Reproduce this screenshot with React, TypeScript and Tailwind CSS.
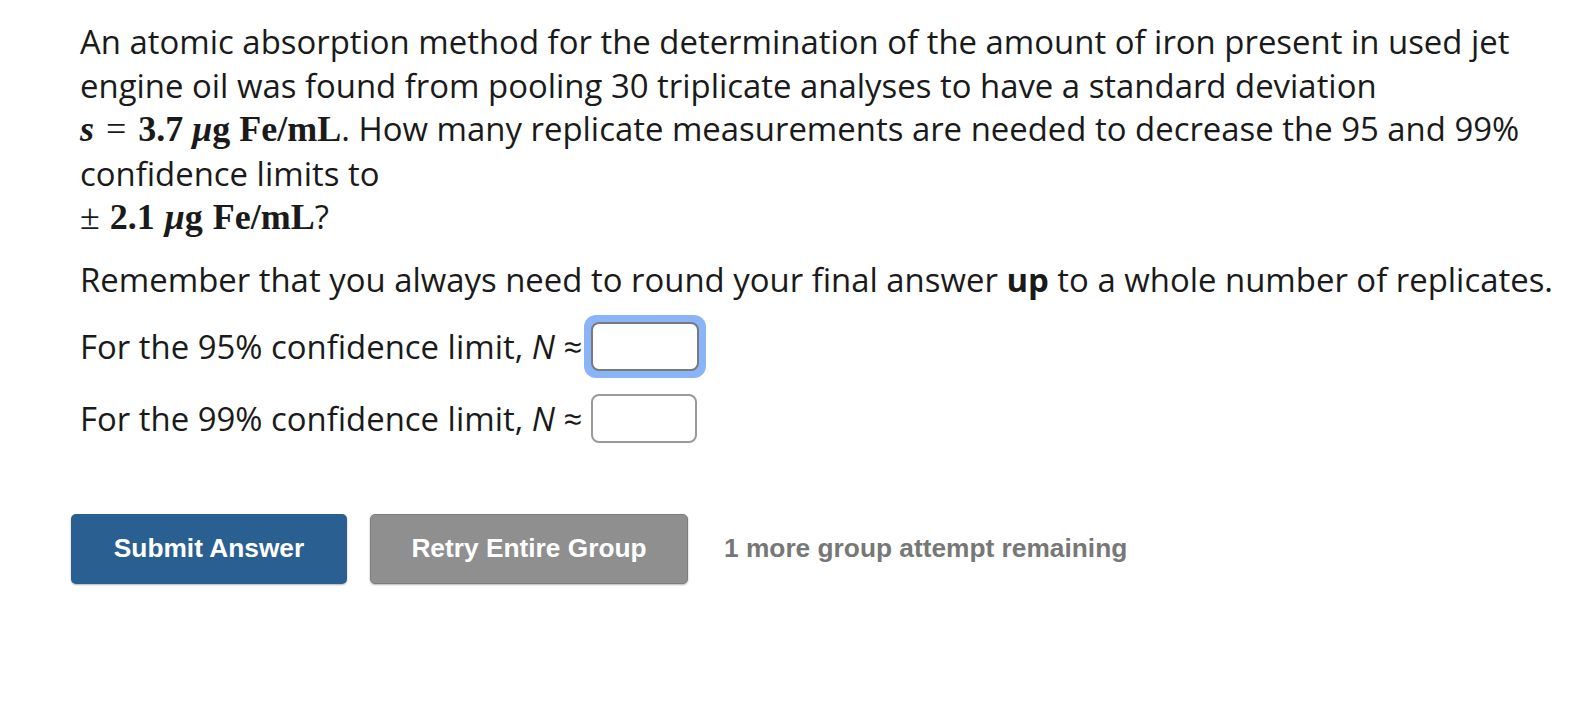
import React from "react";

const math = "font-['Liberation_Serif',serif] font-bold text-[36px]";

export default function App() {
  return (
    <div className="w-[1589px] h-[708px] bg-white text-[#1a1a1a] font-['Open_Sans',sans-serif]">
      <div className="pl-[80px] pt-[20px] pr-[20px] text-[32.9px] leading-[43.5px]">
        <p className="whitespace-nowrap">
          An atomic absorption method for the determination of the amount of iron present in used jet
          <br />
          engine oil was found from pooling 30 triplicate analyses to have a standard deviation
          <br />
          <span className={math}>
            <i>s</i>
            <span className="mx-[12px] font-normal">=</span>3.7<i className="ml-[9px]">μ</i>g
            <span className="ml-[9px]">Fe/mL</span>
          </span>
          . How many replicate measurements are needed to decrease the 95 and 99%
          <br />
          confidence limits to
          <br />
          <span className={math}>
            <span className="mr-[10px] font-normal">±</span>2.1<i className="ml-[10px]">μ</i>g
            <span className="ml-[10px]">Fe/mL</span>
          </span>
          ?
        </p>
        <p className="mt-[18px] whitespace-nowrap">
          Remember that you always need to round your final answer <b>up</b> to a whole number of replicates.
        </p>
        <div className="mt-[14px] flex items-center h-[63px] whitespace-nowrap">
          <span>
            For the 95% confidence limit, <i>N</i> ≈
          </span>
          <div className="ml-[2px] rounded-[12px] bg-[#8ab4f8] p-[7px]">
            <div className="w-[108px] h-[49px] rounded-[8px] border-2 border-[#7a7a7a] bg-white" />
          </div>
        </div>
        <div className="mt-[9px] flex items-center h-[63px] whitespace-nowrap">
          <span>
            For the 99% confidence limit, <i>N</i> ≈
          </span>
          <div className="ml-[2px] p-[7px]">
            <div className="w-[106px] h-[49px] rounded-[8px] border-2 border-[#9a9a9a] bg-white" />
          </div>
        </div>
      </div>
      <div className="mt-[64px] ml-[71px] flex items-center font-['Liberation_Sans',sans-serif] font-bold text-[26.3px]">
        <button className="shrink-0 w-[276px] h-[70px] rounded-[5px] bg-[#2a5f91] text-white shadow-[0_1px_2px_rgba(0,0,0,0.3)]">
          Submit Answer
        </button>
        <button className="shrink-0 ml-[23px] w-[318px] h-[70px] rounded-[5px] bg-[#8f8f8f] text-white border border-[#7d7d7d] shadow-[0_1px_2px_rgba(0,0,0,0.3)]">
          Retry Entire Group
        </button>
        <span className="ml-[36px] text-[#777777] whitespace-nowrap">1 more group attempt remaining</span>
      </div>
    </div>
  );
}
